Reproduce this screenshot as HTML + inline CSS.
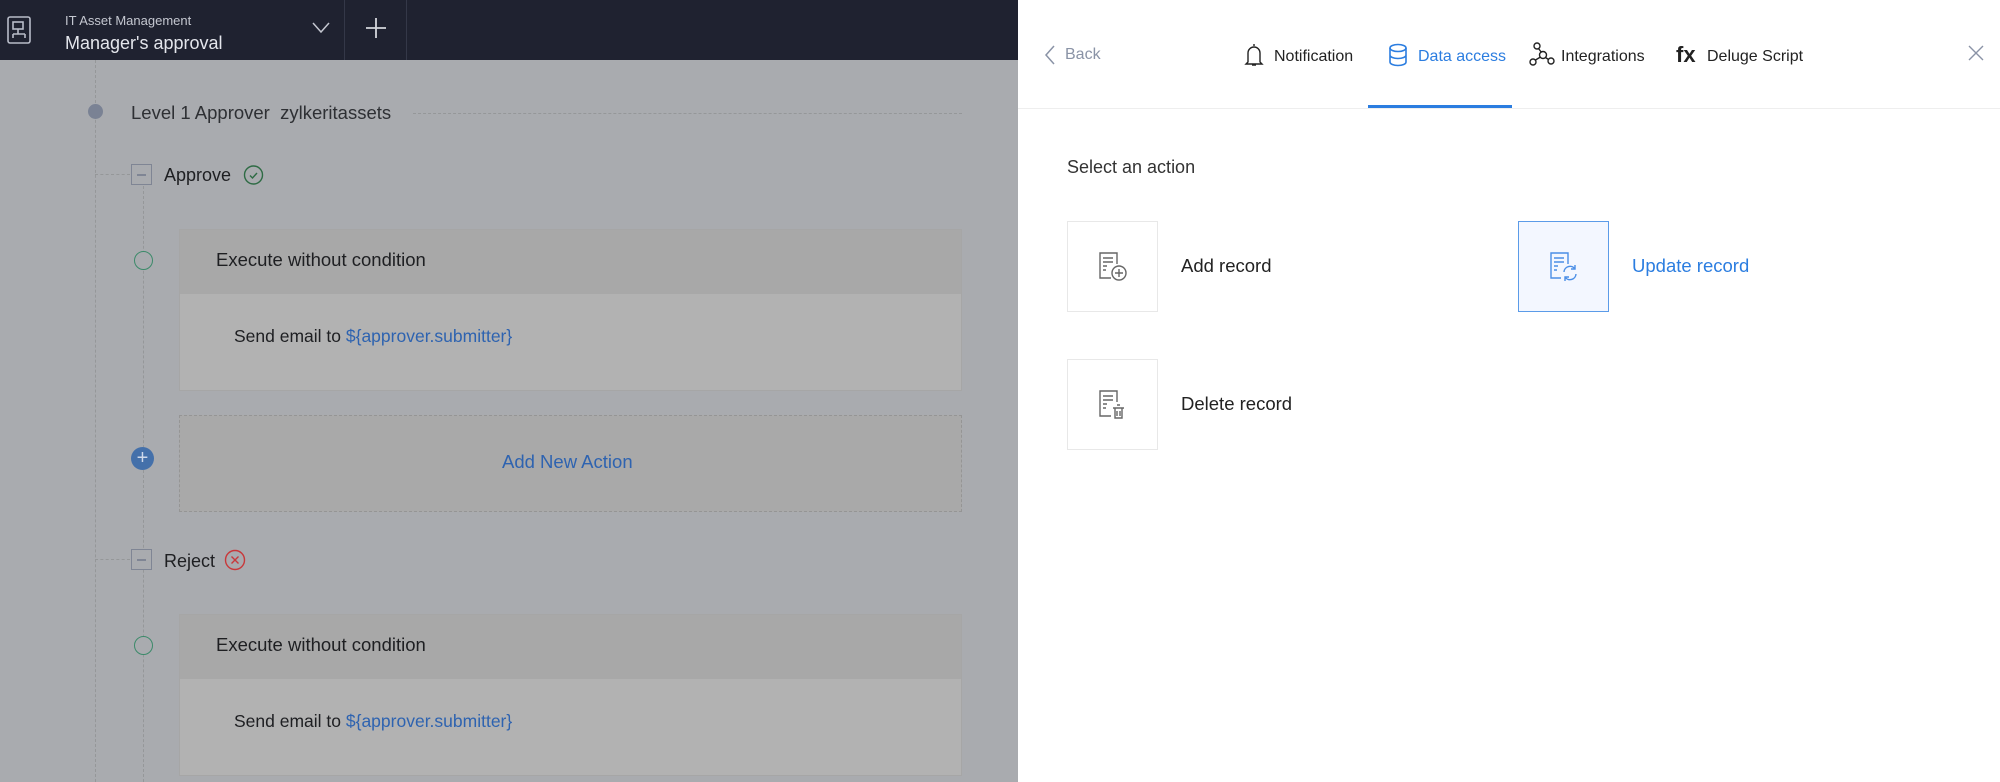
<!DOCTYPE html>
<html><head><meta charset="utf-8"><style>
*{margin:0;padding:0;box-sizing:border-box}
body{width:2000px;height:782px;overflow:hidden;font-family:"Liberation Sans",sans-serif;background:#a9abaf;position:relative}
.a{position:absolute}
.hdr{left:0;top:0;width:1018px;height:60px;background:#1f2230}
.t{position:absolute;white-space:nowrap;line-height:1}
.card{position:absolute;left:179px;width:783px;background:#b2b2b2;border:1px solid #a6a6a6}
.card .h{height:64px;background:#a8a8a8}
.panel{left:1018px;top:0;width:982px;height:782px;background:#fff}
.box{position:absolute;width:91px;height:91px;border:1px solid #e8e8e8;background:#fff}
</style></head><body>
<div class="a hdr">
  <svg class="a" style="left:7px;top:16px" width="24" height="28" viewBox="0 0 24 28" fill="none" stroke="#b8bcc8" stroke-width="1.6"><rect x="1" y="1" width="22" height="26" rx="2"/><rect x="6" y="6" width="10" height="7"/><path d="M11 13v5M6 18h12M6 18v4M18 18v4"/></svg>
  <div class="t" style="left:65px;top:14px;font-size:13px;color:#c4c7d0">IT Asset Management</div>
  <div class="t" style="left:65px;top:34px;font-size:18px;color:#e4e6ec">Manager's approval</div>
  <svg class="a" style="left:312px;top:22px" width="18" height="12" viewBox="0 0 18 12" fill="none" stroke="#c4c7d0" stroke-width="1.5"><path d="M1 1l8 9 8-9"/></svg>
  <div class="a" style="left:344px;top:0;width:1px;height:60px;background:#343848"></div>
  <svg class="a" style="left:365px;top:17px" width="22" height="22" fill="none" stroke="#d4d6dc" stroke-width="1.8"><path d="M11 1v20M1 11h20"/></svg>
  <div class="a" style="left:406px;top:0;width:1px;height:60px;background:#343848"></div>
</div>
<div class="a" style="left:95px;top:60px;height:722px;border-left:1px dashed #959799"></div>
<div class="a" style="left:143px;top:186px;height:596px;border-left:1px dashed #959799"></div>
<div class="a" style="left:95px;top:174px;width:35px;border-top:1px dashed #959799"></div>
<div class="a" style="left:95px;top:559px;width:35px;border-top:1px dashed #959799"></div>
<div class="a" style="left:413px;top:113px;width:549px;border-top:1px dashed #959799"></div>
<div class="a" style="left:88px;top:104px;width:15px;height:15px;border-radius:50%;background:#7a8294"></div>
<div class="t" style="left:131px;top:104px;font-size:18.5px;color:#2e3034">Level 1 Approver&nbsp;&nbsp;zylkeritassets</div>
<div class="a" style="left:131px;top:164px;width:21px;height:21px;border:1px solid #7f8594;background:#a9abaf"><div class="a" style="left:5px;top:9px;width:9px;height:1.5px;background:#7f8594"></div></div>
<div class="t" style="left:164px;top:166px;font-size:18px;color:#1e1f22">Approve</div>
<svg class="a" style="left:243px;top:164px" width="21" height="22" fill="none" stroke="#2e6b44" stroke-width="1.4"><circle cx="10.5" cy="11" r="9"/><path d="M7 11.5l2.5 2.5 4.5-5"/></svg>
<div class="card" style="top:229px;height:162px"><div class="h"></div></div>
<div class="a" style="left:134px;top:251px;width:19px;height:19px;border-radius:50%;border:1.5px solid #3c8a6a;background:#a9abaf"></div>
<div class="t" style="left:216px;top:251px;font-size:18.5px;color:#1e1f22">Execute without condition</div>
<div class="t" style="left:234px;top:328px;font-size:17.5px;color:#1e1f22">Send email to <span style="color:#2e63b0">${approver.submitter}</span></div>
<div class="a" style="left:179px;top:415px;width:783px;height:97px;background:#a9a9a9;border:1px dashed #959595"></div>
<div class="a" style="left:131px;top:447px;width:23px;height:23px;border-radius:50%;background:#4470aa;color:#cfd9ea;font-size:20px;line-height:22px;text-align:center">+</div>
<div class="t" style="left:502px;top:453px;font-size:18.5px;color:#2e63b0">Add New Action</div>
<div class="a" style="left:131px;top:549px;width:21px;height:21px;border:1px solid #7f8594;background:#a9abaf"><div class="a" style="left:5px;top:9px;width:9px;height:1.5px;background:#7f8594"></div></div>
<div class="t" style="left:164px;top:552px;font-size:18px;color:#1e1f22">Reject</div>
<svg class="a" style="left:224px;top:549px" width="22" height="22" fill="none" stroke="#c8383a" stroke-width="1.4"><circle cx="11" cy="11" r="9.5"/><path d="M7.5 7.5l7 7M14.5 7.5l-7 7"/></svg>
<div class="card" style="top:614px;height:162px"><div class="h"></div></div>
<div class="a" style="left:134px;top:636px;width:19px;height:19px;border-radius:50%;border:1.5px solid #3c8a6a;background:#a9abaf"></div>
<div class="t" style="left:216px;top:636px;font-size:18.5px;color:#1e1f22">Execute without condition</div>
<div class="t" style="left:234px;top:713px;font-size:17.5px;color:#1e1f22">Send email to <span style="color:#2e63b0">${approver.submitter}</span></div>

<div class="a panel">
  <svg class="a" style="left:26px;top:45px" width="12" height="20" fill="none" stroke="#8a93a6" stroke-width="1.5"><path d="M10 1L2 10l8 9"/></svg>
  <div class="t" style="left:47px;top:47px;font-size:16px;color:#8a93a6">Back</div>
  <svg class="a" style="left:226px;top:42px" width="20" height="26" fill="none" stroke="#222" stroke-width="1.4"><path d="M10 2v2M4 20V11a6 6 0 0 1 12 0v9l2 2H2z M8 23h4"/></svg>
  <div class="t" style="left:256px;top:49px;font-size:16px;color:#222">Notification</div>
  <svg class="a" style="left:370px;top:43px" width="20" height="24" fill="none" stroke="#2b7de0" stroke-width="1.6"><ellipse cx="10" cy="5" rx="8" ry="3.5"/><path d="M2 5v14c0 2 3.6 3.5 8 3.5s8-1.5 8-3.5V5M2 12c0 2 3.6 3.5 8 3.5s8-1.5 8-3.5"/></svg>
  <div class="t" style="left:400px;top:49px;font-size:16px;color:#2b7de0">Data access</div>
  <div class="a" style="left:350px;top:105px;width:144px;height:3px;background:#2b7de0"></div>
  <svg class="a" style="left:511px;top:42px" width="26" height="24" fill="none" stroke="#222" stroke-width="1.4"><circle cx="8" cy="4" r="3"/><circle cx="14" cy="13" r="3.5"/><circle cx="4" cy="20" r="3"/><circle cx="22" cy="19" r="3"/><path d="M9.5 6.5l3 4M11.5 15l-5 3M16.5 15.5l3 2"/></svg>
  <div class="t" style="left:543px;top:49px;font-size:16px;color:#222">Integrations</div>
  <div class="t" style="left:658px;top:44px;font-size:22px;font-weight:bold;color:#222">fx</div>
  <div class="t" style="left:689px;top:49px;font-size:16px;color:#222">Deluge Script</div>
  <svg class="a" style="left:950px;top:45px" width="16" height="16" fill="none" stroke="#8a93a6" stroke-width="1.4"><path d="M1 1l14 14M15 1L1 15"/></svg>
  <div class="a" style="left:0;top:108px;width:982px;height:1px;background:#eeeeee"></div>
  <div class="t" style="left:49px;top:158px;font-size:18px;color:#333">Select an action</div>
  <div class="box" style="left:49px;top:221px">
    <svg class="a" style="left:29px;top:29px" width="32" height="32" viewBox="0 0 32 32" fill="none" stroke="#666" stroke-width="1.4"><path d="M14 27H3V2h17v11"/><path d="M6 7h10M6 11h10M6 15h4M6 19h3"/><circle cx="22" cy="22" r="7"/><path d="M22 18v8M18 22h8"/></svg>
  </div>
  <div class="t" style="left:163px;top:257px;font-size:18.5px;color:#222">Add record</div>
  <div class="box" style="left:500px;top:221px;border-color:#5b9be8;background:#f3f7ff">
    <svg class="a" style="left:29px;top:29px" width="32" height="32" viewBox="0 0 32 32" fill="none" stroke="#4a8ee6" stroke-width="1.4"><path d="M13 27H3V2h17v11"/><path d="M6 7h10M6 11h10M6 15h4M6 19h3"/><path d="M16 21a6 6 0 0 1 11-3M28 23a6 6 0 0 1-11 3"/><path d="M27 14v4h-4M17 30v-4h4"/></svg>
  </div>
  <div class="t" style="left:614px;top:257px;font-size:18.5px;color:#2b7de0">Update record</div>
  <div class="box" style="left:49px;top:359px">
    <svg class="a" style="left:29px;top:29px" width="32" height="32" viewBox="0 0 32 32" fill="none" stroke="#666" stroke-width="1.4"><path d="M14 27H3V2h17v11"/><path d="M6 7h10M6 11h10M6 15h4M6 19h3"/><path d="M16 19h11M18 19v10h7V19M20 16h3M20 22v5M23 22v5"/></svg>
  </div>
  <div class="t" style="left:163px;top:395px;font-size:18.5px;color:#222">Delete record</div>
</div>
</body></html>
